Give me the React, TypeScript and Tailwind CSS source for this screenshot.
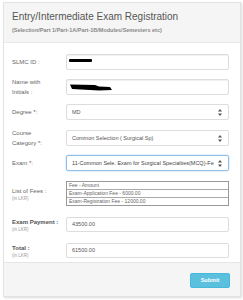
import React from 'react';

function Arrows() {
  return (
    <svg width="4" height="7" viewBox="0 0 4 7" className="shrink-0">
      <path d="M2 0 L4 2.6 L0 2.6 Z" fill="#555" />
      <path d="M2 7 L4 4.4 L0 4.4 Z" fill="#555" />
    </svg>
  );
}

function Label({ text, sub, bold }: { text: React.ReactNode; sub?: boolean; bold?: boolean }) {
  return (
    <div className="w-[54px] shrink-0 whitespace-nowrap">
      <div className={`text-[6px] leading-[10px] ${bold ? 'font-bold text-[#555]' : 'text-[#666]'}`}>{text}</div>
      {sub && <div className="text-[4.5px] leading-[6px] text-[#999]">(in LKR)</div>}
    </div>
  );
}

export default function App() {
  return (
    <div className="w-[243px] h-[300px] bg-white pt-[2px] pl-[3px] overflow-hidden" style={{ fontFamily: '"Liberation Sans", Arial, sans-serif' }}>
      <div className="w-[238px] h-[295px] border border-[#e3e3e3] shadow-[1px_1px_2px_rgba(0,0,0,0.15)] flex flex-col bg-white">
        {/* Header */}
        <div className="h-[40px] shrink-0 bg-[#f5f5f5] border-b border-[#e8e8e8] px-[8px] pt-[8px]">
          <h1 className="text-[10px] leading-[12px] text-[#555]">Entry/Intermediate Exam Registration</h1>
          <p className="mt-[4px] text-[5.5px] leading-[7px] font-bold text-[#888] whitespace-nowrap">
            (Selection/Part 1/Part-1A/Part-1B/Modules/Semesters etc)
          </p>
        </div>

        {/* Body */}
        <div className="flex-1 pl-[8px] pr-[11px] pt-[11px]">
          <div className="flex items-center h-[16px]">
            <Label text="SLMC ID :" />
            <div className="flex-1 h-[16px] border border-[#ddd] rounded-[2px] shadow-[inset_0_1px_1px_rgba(0,0,0,0.06)] flex items-center pl-[2px]">
              <div className="w-[23px] h-[3px] bg-black rounded-[1px] -mt-[3px]" />
            </div>
          </div>

          <div className="flex items-center h-[16px] mt-[9px]">
            <Label text={<>Name with<br />Initials :</>} />
            <div className="flex-1 h-[16px] border border-[#ddd] rounded-[2px] shadow-[inset_0_1px_1px_rgba(0,0,0,0.06)] flex items-center pl-[2px]">
              <svg width="44" height="8" viewBox="0 0 44 8" className="mt-[1px]">
                <path d="M1 0.5 L26 1 L30 2.5 L41 3 L43 6 L30 6.5 L12 5.5 L3 5 Z" fill="#000" />
              </svg>
            </div>
          </div>

          <div className="flex items-center h-[16px] mt-[9px]">
            <Label text="Degree *:" />
            <div className="flex-1 h-[16px] border border-[#ddd] rounded-[2px] flex items-center justify-between pl-[5px] pr-[6px] text-[5.5px] text-[#555]">
              <span>MD</span>
              <Arrows />
            </div>
          </div>

          <div className="flex items-center h-[16px] mt-[10px]">
            <Label text={<>Course<br />Category *:</>} />
            <div className="flex-1 h-[16px] border border-[#ddd] rounded-[2px] flex items-center justify-between pl-[5px] pr-[6px] text-[5.5px] text-[#555]">
              <span>Common Selection ( Surgical Sp)</span>
              <Arrows />
            </div>
          </div>

          <div className="flex items-center h-[16px] mt-[9px]">
            <Label text="Exam *:" />
            <div className="flex-1 min-w-0 h-[16px] border border-[#8fbfe6] rounded-[2px] shadow-[0_0_2px_rgba(102,175,233,0.6)] flex items-center pl-[5px] pr-[6px] gap-[2px] text-[5.5px] text-[#444]">
              <span className="flex-1 whitespace-nowrap overflow-hidden">11-Common Sele. Exam for Surgical Specialties(MCQ)-Fe</span>
              <Arrows />
            </div>
          </div>

          <div className="flex items-center h-[25px] mt-[10px]">
            <Label text="List of Fees :" sub />
            <div className="flex-1 border border-[#999] text-[5px] leading-[7px] text-[#666]">
              <div className="pl-[2px] border-b border-[#aaa]">Fee - Amount</div>
              <div className="pl-[2px] border-b border-[#aaa]">Exam-Application Fee - 6000.00</div>
              <div className="pl-[2px]">Exam-Registration Fee - 12000.00</div>
            </div>
          </div>

          <div className="flex items-center h-[15px] mt-[11px]">
            <Label text="Exam Payment :" sub bold />
            <div className="flex-1 h-[15px] border border-[#ddd] rounded-[2px] flex items-center pl-[5px] text-[5.5px] text-[#555]">
              43500.00
            </div>
          </div>

          <div className="flex items-center h-[15px] mt-[11px]">
            <Label text="Total :" sub bold />
            <div className="flex-1 h-[15px] border border-[#ddd] rounded-[2px] flex items-center pl-[5px] text-[5.5px] text-[#555]">
              61500.00
            </div>
          </div>
        </div>

        {/* Footer */}
        <div className="h-[34px] shrink-0 bg-[#f5f5f5] border-t border-[#e5e5e5] flex justify-end items-start pt-[10px] pr-[10px]">
          <button className="w-[40px] h-[15px] bg-[#5bc0de] border border-[#46b8da] rounded-[2px] text-white text-[5.5px] font-bold">
            Submit
          </button>
        </div>
      </div>
    </div>
  );
}
